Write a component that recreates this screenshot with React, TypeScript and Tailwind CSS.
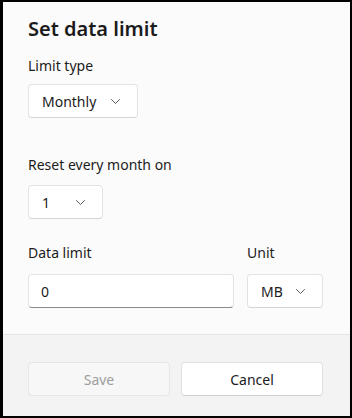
import React from 'react';

const font = { fontFamily: '"Segoe UI", "Noto Sans", "Open Sans", sans-serif' };

function Chevron() {
  return (
    <svg width="9" height="5" viewBox="0 0 9 5" fill="none" className="text-[#5c5c5c]">
      <path d="M0.5 0.5 L4.5 4.5 L8.5 0.5" stroke="currentColor" strokeWidth="1" strokeLinecap="round" strokeLinejoin="round" />
    </svg>
  );
}

function Dropdown({ value, width }: { value: string; width: string }) {
  return (
    <div
      className={`${width} h-[34px] flex items-center justify-between pl-[13px] pr-[17px] bg-white border border-[#e3e3e3] border-b-[#d4d4d4] rounded-[4px] text-[14px] text-[#1b1b1b]`}
    >
      <span>{value}</span>
      <Chevron />
    </div>
  );
}

export default function App() {
  return (
    <div
      className="w-[352px] h-[418px] flex flex-col border-black border-t-2 border-b-2 border-r-2 border-l-[3px] bg-[#fbfbfb]"
      style={font}
    >
      <div className="flex-1 pl-[25px] pr-[27px] pt-[13px]">
        <h1 className="text-[20px] leading-[28px] font-semibold text-[#1b1b1b]">Set data limit</h1>

        <div className="mt-[13px] text-[14px] leading-[20px] text-[#1b1b1b]">Limit type</div>
        <div className="mt-[8px]">
          <Dropdown value="Monthly" width="w-[110px]" />
        </div>

        <div className="mt-[37px] text-[14px] leading-[20px] text-[#1b1b1b]">Reset every month on</div>
        <div className="mt-[10px]">
          <Dropdown value="1" width="w-[75px]" />
        </div>

        <div className="mt-[24px] flex gap-[13px]">
          <div className="flex flex-col">
            <div className="text-[14px] leading-[20px] text-[#1b1b1b]">Data limit</div>
            <div className="mt-[11px] w-[206px] h-[34px] flex items-center pl-[12px] bg-white border border-[#e3e3e3] border-b-[#8a8a8a] rounded-[4px] text-[14px] text-[#1b1b1b]">
              0
            </div>
          </div>
          <div className="flex flex-col">
            <div className="text-[14px] leading-[20px] text-[#1b1b1b]">Unit</div>
            <div className="mt-[11px]">
              <Dropdown value="MB" width="w-[76px]" />
            </div>
          </div>
        </div>
      </div>

      <div className="h-[82px] bg-[#f3f3f3] border-t border-[#e5e5e5] pl-[25px] pt-[27px] flex gap-[11px]">
        <button className="w-[142px] h-[34px] rounded-[4px] border border-[#e6e6e6] bg-[#f7f7f7] text-[14px] text-[#9d9d9d]">
          Save
        </button>
        <button className="w-[142px] h-[34px] rounded-[4px] border border-[#e0e0e0] border-b-[#cfcfcf] bg-white text-[14px] text-[#1b1b1b]">
          Cancel
        </button>
      </div>
    </div>
  );
}
